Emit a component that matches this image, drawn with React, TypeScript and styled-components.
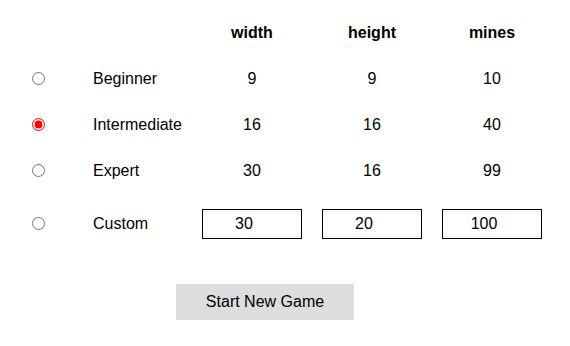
import React, { useState } from "react";
import styled, { createGlobalStyle } from "styled-components";

const GlobalStyle = createGlobalStyle`
  html, body {
    margin: 0;
    background: #fff;
    font-family: "Liberation Sans", Arial, sans-serif;
    font-size: 16px;
    color: #000;
  }
`;

const Page = styled.div`
  padding: 10px 8px;
`;

const Grid = styled.div`
  display: grid;
  grid-template-columns: 60px 124px 120px 120px 120px;
`;

const Cell = styled.div<{ $align?: "left" | "center"; $bold?: boolean; $tall?: boolean }>`
  height: ${({ $tall }) => ($tall ? 60 : 46)}px;
  display: flex;
  align-items: center;
  justify-content: ${({ $align }) => ($align === "left" ? "flex-start" : "center")};
  padding-left: ${({ $align }) => ($align === "left" ? "25px" : "0")};
  font-weight: ${({ $bold }) => ($bold ? "bold" : "normal")};
`;

const Radio = styled.input`
  margin: 0 0 2px 0;
  width: 13px;
  height: 13px;
  accent-color: #ff0000;
`;

const NumberBox = styled.input`
  box-sizing: border-box;
  width: 100px;
  height: 30px;
  border: 1px solid #000;
  border-radius: 0;
  padding: 0 16px 0 0;
  text-align: center;
  font-family: "Liberation Sans", Arial, sans-serif;
  font-size: 16px;
  color: #000;
  outline: none;
`;

const ButtonRow = styled.div`
  padding: 30px 0 0 168px;
`;

const StartButton = styled.button`
  width: 178px;
  height: 36px;
  border: none;
  background: #dddddd;
  font-family: "Liberation Sans", Arial, sans-serif;
  font-size: 16px;
  color: #000;
`;

const levels = [
  { name: "Beginner", w: 9, h: 9, m: 10 },
  { name: "Intermediate", w: 16, h: 16, m: 40 },
  { name: "Expert", w: 30, h: 16, m: 99 },
];

export default function App() {
  const [level, setLevel] = useState("Intermediate");
  const [custom, setCustom] = useState({ w: "30", h: "20", m: "100" });

  return (
    <>
      <GlobalStyle />
      <Page>
        <Grid>
          <Cell />
          <Cell />
          <Cell $bold>width</Cell>
          <Cell $bold>height</Cell>
          <Cell $bold>mines</Cell>

          {levels.map((l) => (
            <React.Fragment key={l.name}>
              <Cell>
                <Radio
                  type="radio"
                  name="level"
                  checked={level === l.name}
                  onChange={() => setLevel(l.name)}
                />
              </Cell>
              <Cell $align="left">{l.name}</Cell>
              <Cell>{l.w}</Cell>
              <Cell>{l.h}</Cell>
              <Cell>{l.m}</Cell>
            </React.Fragment>
          ))}

          <Cell $tall>
            <Radio
              type="radio"
              name="level"
              checked={level === "Custom"}
              onChange={() => setLevel("Custom")}
            />
          </Cell>
          <Cell $tall $align="left">Custom</Cell>
          <Cell $tall>
            <NumberBox value={custom.w} onChange={(e) => setCustom({ ...custom, w: e.target.value })} />
          </Cell>
          <Cell $tall>
            <NumberBox value={custom.h} onChange={(e) => setCustom({ ...custom, h: e.target.value })} />
          </Cell>
          <Cell $tall>
            <NumberBox value={custom.m} onChange={(e) => setCustom({ ...custom, m: e.target.value })} />
          </Cell>
        </Grid>
        <ButtonRow>
          <StartButton>Start New Game</StartButton>
        </ButtonRow>
      </Page>
    </>
  );
}
